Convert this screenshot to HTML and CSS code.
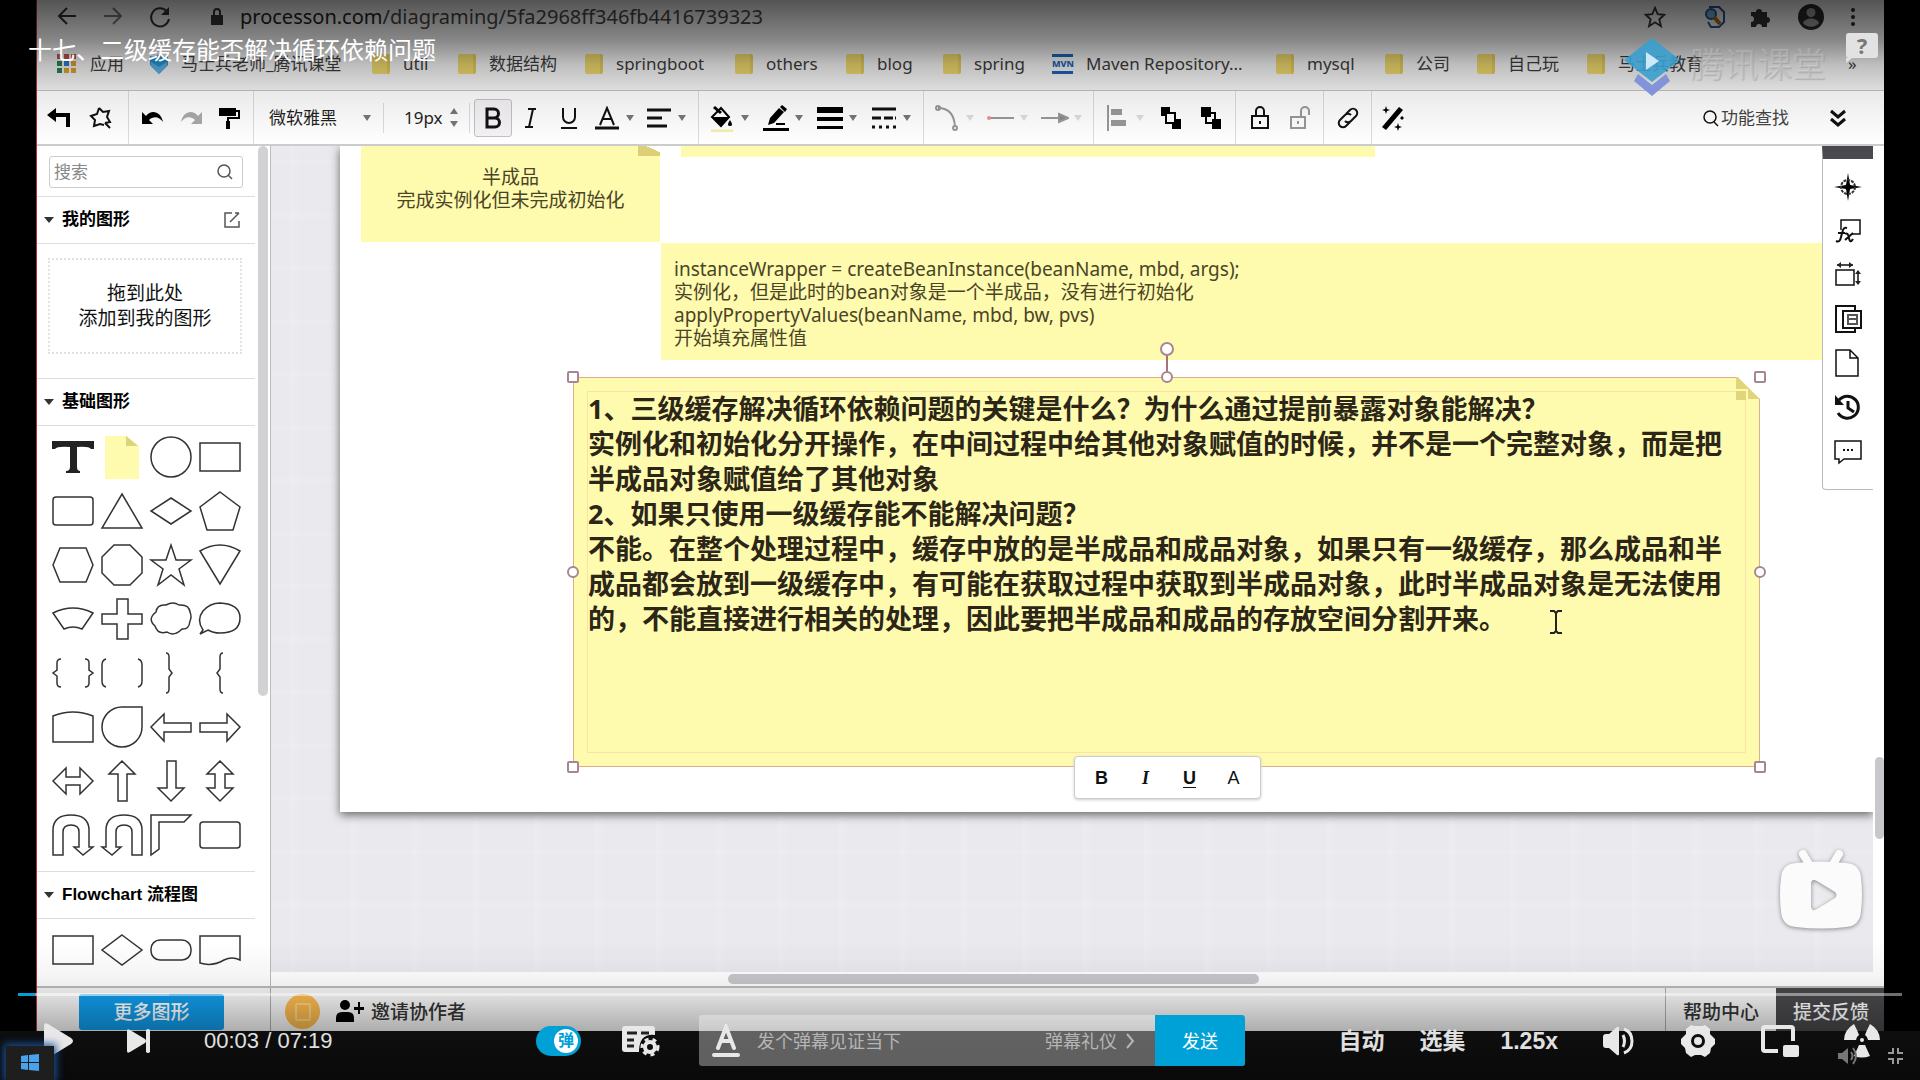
FILE: index.html
```html
<!DOCTYPE html>
<html lang="zh-CN">
<head>
<meta charset="utf-8">
<title>十七、二级缓存能否解决循环依赖问题</title>
<link rel="stylesheet" href="styles.css">
</head>
<body>
<div class="player">
  <div class="video">
    <header class="browser">
      <div class="address">
        <div class="nav">
          <svg width="22" height="22" viewBox="0 0 22 22" class="line dark"><path d="M20 11H3M11 3l-8 8 8 8"/></svg>
          <svg width="22" height="22" viewBox="0 0 22 22" class="line faint"><path d="M2 11h17M11 3l8 8-8 8"/></svg>
          <svg width="24" height="24" viewBox="0 0 24 24" class="line dark"><path d="M19 6.500A9 9 0 1 0 21 14"/><path d="M21 2v8h-8z" fill="#333" stroke="none"/></svg>
        </div>
        <svg class="padlock" width="14" height="18" viewBox="0 0 14 18"><path d="M1 7h12v10H1z"/><path d="M4 7V4a3 3 0 0 1 6 0v3" fill="none" stroke="#333" stroke-width="2"/></svg>
        <span class="url"><b>processon.com</b>/diagraming/5fa2968ff346fb4416739323</span>
        <div class="extensions">
          <svg width="22" height="22" viewBox="0 0 24 24" class="line dark"><path d="M12 2l3 7 7 .6-5.300 4.800L18.500 22 12 17.700 5.500 22l1.800-7.600L2 9.600 9 9z"/></svg>
          <svg width="22" height="22" viewBox="0 0 22 22"><path d="M6 1h10l5 5v10l-5 5H8l-3-5" fill="none" stroke="#2a548c" stroke-width="2"/><circle cx="8" cy="8" r="5" fill="#78a9cf" stroke="#1e569c" stroke-width="2"/><path d="M11 11l6 7" stroke="#a66a16" stroke-width="4"/></svg>
          <svg width="22" height="22" viewBox="0 0 22 22"><path d="M1 6h5a3 3 0 1 1 6 0h5v5a3 3 0 1 1 0 6v4h-5a3 3 0 0 0-6 0H1v-5a3 3 0 0 0 0-6z" fill="#303030"/></svg>
          <svg width="28" height="28" viewBox="0 0 28 28"><circle cx="14" cy="14" r="13" fill="#292929"/><circle cx="14" cy="9.500" r="4.500" fill="#9a9a9a"/><path d="M6 20c2-6 14-6 16 0-4 5-12 5-16 0z" fill="#9a9a9a"/></svg>
          <svg width="6" height="20" viewBox="0 0 6 20" fill="#292929"><circle cx="3" cy="3" r="2"/><circle cx="3" cy="10" r="2"/><circle cx="3" cy="17" r="2"/></svg>
        </div>
      </div>
      <nav class="bookmarks">
        <a href="#"><svg width="20" height="20" viewBox="0 0 20 20"><path d="M0 0h5v5H0zM7 0h5v5H7zM14 0h5v5h-5z" fill="#bf5344"/><path d="M0 7h5v5H0zM0 14h5v5H0z" fill="#29834f"/><path d="M7 7h5v5H7z" fill="#2f79d0"/><path d="M14 7h5v5h-5zM7 14h5v5H7zM14 14h5v5h-5z" fill="#d99f2b"/></svg>应用</a>
        <a href="#"><svg width="18" height="20" viewBox="0 0 18 20"><path d="M0 2q5 2 9-2 4 4 9 2v9l-9 9-9-9z" fill="#2594cf"/><path d="M1 8l8 5 8-5v4l-8 8-8-8z" fill="#5bb0e6"/></svg>马士兵老师_腾讯课堂</a>
        <a href="#"><span class="folder"></span>util</a>
        <a href="#"><span class="folder"></span>数据结构</a>
        <a href="#"><span class="folder"></span>springboot</a>
        <a href="#"><span class="folder"></span>others</a>
        <a href="#"><span class="folder"></span>blog</a>
        <a href="#"><span class="folder"></span>spring</a>
        <a href="#"><span class="mvn">MVN</span>Maven Repository...</a>
        <a href="#"><span class="folder"></span>mysql</a>
        <a href="#"><span class="folder"></span>公司</a>
        <a href="#"><span class="folder"></span>自己玩</a>
        <a href="#"><span class="folder"></span>马士兵教育</a>
        <a href="#" class="overflow">»</a>
      </nav>
    </header>

    <div class="toolbar">
      <div class="group first">
        <button class="tool" aria-label="返回"><svg width="24" height="22" viewBox="0 0 24 22"><path d="M0 8l9-7v5h14v14h-4V10H9v5z"/></svg></button>
        <button class="tool" aria-label="收藏"><svg width="24" height="24" viewBox="0 0 24 24" class="line"><path d="M11 2l4 4 6-1-2 6 3 5-5 1M11 2L9 8l-6 2 4 4-1 6 6-2 4 1M17 17l5 5"/></svg></button>
      </div>
      <div class="group">
        <button class="tool" aria-label="撤销"><svg width="24" height="20" viewBox="0 0 24 20"><path d="M1 4v12h11l-4-4c4-4 10-4 14 2C20 3 10 1 5 8z"/></svg></button>
        <button class="tool" aria-label="重做"><svg width="24" height="20" viewBox="0 0 24 20" fill="#aaa"><path d="M23 4v12H12l4-4C12 8 6 8 2 14 4 3 14 1 19 8z"/></svg></button>
        <button class="tool" aria-label="格式刷"><svg width="24" height="24" viewBox="0 0 24 24"><path d="M2 2h17v8H2z"/><path d="M19 5h3v7H11v4" fill="none" stroke="#000" stroke-width="2"/><path d="M9 15h4v8H9z"/></svg></button>
      </div>
      <div class="font"><select aria-label="字体"><option>微软雅黑</option></select><i class="caret"></i></div>
      <div class="size"><input type="text" value="19px" aria-label="字号"><span class="spin"><i class="caret flip"></i><i class="caret"></i></span></div>
      <div class="group text">
        <button class="tool active" aria-label="加粗"><svg width="20" height="24" viewBox="0 0 20 24" class="line thick"><path d="M4 3h7a4 4 0 0 1 0 9H4zM4 12h8a4 4 0 0 1 0 9H4z"/></svg></button>
        <button class="tool" aria-label="斜体"><svg width="20" height="24" viewBox="0 0 20 24" class="line"><path d="M7 3h8M4 21h8M12 3L8 21"/></svg></button>
        <button class="tool" aria-label="下划线"><svg width="20" height="24" viewBox="0 0 20 24" class="line"><path d="M4 2v9a6 6 0 0 0 12 0V2M2 22h16"/></svg></button>
        <button class="combo" aria-label="文字颜色"><svg width="28" height="24" viewBox="0 0 28 24" class="line"><path d="M7 19l7-17 7 17M10 13h8"/><path d="M2 22h24" stroke-width="3"/></svg><i class="caret"></i></button>
        <button class="combo" aria-label="对齐"><svg width="28" height="24" viewBox="0 0 28 24" class="line thick"><path d="M2 4h24M2 12h15M2 20h20"/></svg><i class="caret"></i></button>
      </div>
      <div class="group paint">
        <button class="combo" aria-label="填充"><svg width="28" height="28" viewBox="0 0 28 28"><path d="M4 13l9-9 8 9-8 9z" fill="none" stroke="#000" stroke-width="2"/><path d="M4 13h18l-9 9zM7 2l7 6-2 2-7-6zM22 16q4 6 0 6t0-6"/><path d="M3 27h22" stroke="#f6f1a8" stroke-width="3"/></svg><i class="caret"></i></button>
        <button class="combo" aria-label="线条颜色"><svg width="28" height="26" viewBox="0 0 28 26"><path d="M6 20l2-7 9-10 5 4-10 11zM18 2l2-2 5 4-2 3zM14 18h9v2h-9zM1 23h26v3H1z"/></svg><i class="caret"></i></button>
        <button class="combo" aria-label="线条宽度"><svg width="28" height="24" viewBox="0 0 28 24"><path d="M1 1h26v6H1zM1 11h26v4H1zM1 20h26v3H1z"/></svg><i class="caret"></i></button>
        <button class="combo" aria-label="线条样式"><svg width="28" height="24" viewBox="0 0 28 24" class="line thick"><path d="M2 3h24"/><path d="M2 12h24" stroke-dasharray="9 3 9 2 3"/><path d="M2 21h24" stroke-dasharray="3 4"/></svg><i class="caret"></i></button>
      </div>
      <div class="group connect">
        <button class="combo" aria-label="连线类型"><svg width="28" height="26" viewBox="0 0 28 26" class="line mute"><path d="M5 3q16 0 17 19"/><circle cx="5" cy="3" r="2"/><circle cx="22" cy="23" r="2"/></svg><i class="caret light"></i></button>
        <button class="combo" aria-label="起点"><svg width="28" height="24" viewBox="0 0 28 24" class="line mute"><path d="M1 12h26"/><circle cx="2" cy="12" r="1" stroke="#f09090"/></svg><i class="caret light"></i></button>
        <button class="combo" aria-label="终点"><svg width="28" height="24" viewBox="0 0 28 24" class="line mute"><path d="M0 12h20"/><path d="M18 8l9 4-9 4z" fill="#888"/></svg><i class="caret light"></i></button>
      </div>
      <div class="group connect">
        <button class="combo" aria-label="对齐图形"><svg width="28" height="26" viewBox="0 0 28 26" fill="#999"><path d="M4 0h2v26H4zM8 4h11v6H8zM8 15h15v6H8z"/></svg><i class="caret light"></i></button>
        <button class="tool" aria-label="置于顶层"><svg width="22" height="24" viewBox="0 0 22 24"><path d="M1 1h9v9H1zM12 13h9v10h-9z"/><path d="M6 7h9v10H6z" fill="#fff" stroke="#000" stroke-width="2"/></svg></button>
        <button class="tool" aria-label="置于底层"><svg width="22" height="24" viewBox="0 0 22 24"><path d="M6 7h9v10H6z" fill="#fff" stroke="#000" stroke-width="2"/><path d="M1 1h10v10H1zM12 13h9v10h-9z"/></svg></button>
      </div>
      <div class="group locks">
        <button class="tool" aria-label="锁定"><svg width="20" height="24" viewBox="0 0 20 24" class="line"><path d="M2 10h16v12H2zM6 10V5a4 4 0 0 1 8 0v5M10 15v3"/></svg></button>
        <button class="tool" aria-label="解锁"><svg width="22" height="24" viewBox="0 0 22 24" class="line mute"><path d="M2 11h14v11H2zM12 11V5a4 4 0 0 1 8 0v4M9 15v3"/></svg></button>
      </div>
      <div class="group locks">
        <button class="tool" aria-label="链接"><svg width="24" height="24" viewBox="0 0 24 24" class="line"><path d="M10 8l4-4a4 4 0 0 1 6 6l-5 5a4 4 0 0 1-6 0M14 16l-4 4a4 4 0 0 1-6-6l5-5a4 4 0 0 1 6 0"/></svg></button>
      </div>
      <div class="group last">
        <button class="tool" aria-label="美化"><svg width="24" height="26" viewBox="0 0 24 26"><path d="M1 22L18 2l4 3L5 25z"/><path d="M5 1l1 3 3 1-3 1-1 3-1-3-3-1 3-1zM17 18l1 3 3 1-3 1-1 3-1-3-3-1 3-1zM21 11l2 2-2 2-2-2z"/></svg></button>
      </div>
      <button class="find"><svg width="16" height="18" viewBox="0 0 16 18" class="line thin"><circle cx="7" cy="8" r="6"/><path d="M11 13l4 4"/></svg>功能查找</button>
      <button class="tool more" aria-label="收起"><svg width="16" height="18" viewBox="0 0 16 18" class="line thick"><path d="M1 2l7 6 7-6M1 10l7 6 7-6"/></svg></button>
    </div>

    <div class="workspace">
      <aside class="sidebar">
        <div class="shelf">
          <label class="search"><input type="text" placeholder="搜索" aria-label="搜索"><svg width="16" height="16" viewBox="0 0 16 16" class="line dim"><circle cx="7" cy="7" r="6"/><path d="M11 11l4 4"/></svg></label>
          <h2>我的图形<svg width="16" height="16" viewBox="0 0 16 16" class="line dim"><path d="M8 1H1v14h14V9M6 10l9-9M11 1h4"/></svg></h2>
          <div class="dropwrap"><p class="drop">拖到此处<br>添加到我的图形</p></div>
          <h2>基础图形</h2>
          <div class="shapes">
            <svg viewBox="0 0 42 42"><path d="M0 5h42v8h-3q-2-3-14-2v20q0 4 3 4v2H14v-2q4 0 4-4V11Q5 10 3 13H0z" fill="#222" stroke="none"/></svg>
            <svg viewBox="0 0 42 42"><path d="M4 0h22l12 10v33H4z" fill="#fefaae" stroke="none"/><path d="M25 0l12 10H25z" fill="#ddd27e" stroke="none"/></svg>
            <svg viewBox="0 0 42 42"><circle cx="21" cy="21" r="20"/></svg>
            <svg viewBox="0 0 42 42"><path d="M1 7h40v28H1z"/></svg>
            <svg viewBox="0 0 42 42"><rect x="1" y="7" width="40" height="28" rx="3"/></svg>
            <svg viewBox="0 0 42 42"><path d="M21 4l20 34H1z"/></svg>
            <svg viewBox="0 0 42 42"><path d="M21 8l20 13-20 13L1 21z"/></svg>
            <svg viewBox="0 0 42 42"><path d="M21 2l20 15-7 23H8L1 17z"/></svg>
            <svg viewBox="0 0 42 42"><path d="M8 4h26l7 17-7 17H8L1 21z"/></svg>
            <svg viewBox="0 0 42 42"><path d="M13 1h16l12 12v16L29 41H13L1 29V13z"/></svg>
            <svg viewBox="0 0 42 42"><path d="M21 1l5 15h15L29 25l5 16-13-10L8 41l5-16L1 16h15z"/></svg>
            <svg viewBox="0 0 42 42"><path d="M1 7q20-12 40 0L21 40z"/></svg>
            <svg viewBox="0 0 42 42"><path d="M1 15q20-10 40 0L30 31q-9-4-18 0z"/></svg>
            <svg viewBox="0 0 42 42"><path d="M16 1h11v15h14v10H27v15H16V26H1V16h15z"/></svg>
            <svg viewBox="0 0 42 42"><path d="M6 14q1-8 10-7 7-4 13 0 10-1 11 7 2 5 0 9-1 9-8 8-8 8-15 3-9 3-12-6-8-7 1-14z"/></svg>
            <svg viewBox="0 0 42 42"><path d="M4 32Q-3 22 4 13 11 5 21 5q20 1 20 15 0 15-20 15-7 0-12-3l-8 4z"/></svg>
            <svg viewBox="0 0 42 42"><path d="M9 7q-4 0-4 4v7l-4 3 4 3v7q0 4 4 4M33 7q4 0 4 4v7l4 3-4 3v7q0 4-4 4"/></svg>
            <svg viewBox="0 0 42 42"><path d="M5 7q-4 1-4 6v16q0 5 4 6M37 7q4 1 4 6v16q0 5-4 6"/></svg>
            <svg viewBox="0 0 42 42"><path d="M16 1q3 0 3 4v12l3 4-3 4v12q0 4-3 4"/></svg>
            <svg viewBox="0 0 42 42"><path d="M24 1q-3 0-3 4v12l-3 4 3 4v12q0 4 3 4"/></svg>
            <svg viewBox="0 0 42 42"><path d="M1 10q20-8 40 0v26H1z"/></svg>
            <svg viewBox="0 0 42 42"><path d="M21 1h20v20a20 20 0 1 1-20-20z"/></svg>
            <svg viewBox="0 0 42 42"><path d="M1 21L14 8v9h27v9H14v9z"/></svg>
            <svg viewBox="0 0 42 42"><path d="M41 21L28 8v9H1v9h27v9z"/></svg>
            <svg viewBox="0 0 42 42"><path d="M1 21L14 8v9h14V8l13 13-13 13v-9H14v9z"/></svg>
            <svg viewBox="0 0 42 42"><path d="M21 1l13 13h-8v27h-9V14H8z"/></svg>
            <svg viewBox="0 0 42 42"><path d="M21 41l13-13h-8V1h-9v27H8z"/></svg>
            <svg viewBox="0 0 42 42"><path d="M21 1l13 13h-8v14h8L21 41 8 28h8V14H8z"/></svg>
            <svg viewBox="0 0 42 42"><path d="M1 41V15Q2 1 19 1t18 14v18h4l-10 8-9-8h5V18q0-7-8-7t-8 7v23z"/></svg>
            <svg viewBox="0 0 42 42"><path d="M41 41V15Q40 1 23 1T5 15v18H1l10 8 9-8h-5V18q0-7 8-7t8 7v23z"/></svg>
            <svg viewBox="0 0 42 42"><path d="M1 1h40l-7 7H9v27l-8 6z"/></svg>
            <svg viewBox="0 0 42 42"><rect x="1" y="8" width="40" height="26" rx="3"/></svg>
          </div>
          <h2>Flowchart 流程图</h2>
          <div class="shapes">
            <svg viewBox="0 0 42 42"><path d="M1 7h40v28H1z"/></svg>
            <svg viewBox="0 0 42 42"><path d="M21 6l20 15-20 15L1 21z"/></svg>
            <svg viewBox="0 0 42 42"><rect x="1" y="11" width="40" height="20" rx="9"/></svg>
            <svg viewBox="0 0 42 42"><path d="M1 7h40v24q-8-4-16 0-12 7-24 3z"/></svg>
          </div>
        </div>
        <span class="sidebar-thumb"></span>
      </aside>

      <main class="stage">
        <div class="canvas">
          <div class="sheet"></div>
          <div class="note note-half">半成品<br>完成实例化但未完成初始化<span class="ear"></span></div>
          <div class="note note-strip"></div>
          <div class="note note-code">instanceWrapper = createBeanInstance(beanName, mbd, args);<br>实例化，但是此时的bean对象是一个半成品，没有进行初始化<br>applyPropertyValues(beanName, mbd, bw, pvs)<br>开始填充属性值</div>
          <div class="note note-main">
            1、三级缓存解决循环依赖问题的关键是什么？为什么通过提前暴露对象能解决？<br>
            实例化和初始化分开操作，在中间过程中给其他对象赋值的时候，并不是一个完整对象，而是把<br>
            半成品对象赋值给了其他对象<br>
            2、如果只使用一级缓存能不能解决问题？<br>
            不能。在整个处理过程中，缓存中放的是半成品和成品对象，如果只有一级缓存，那么成品和半<br>
            成品都会放到一级缓存中，有可能在获取过程中获取到半成品对象，此时半成品对象是无法使用<br>
            的，不能直接进行相关的处理，因此要把半成品和成品的存放空间分割开来。
            <span class="inner"></span>
            <svg class="fold" width="24" height="24" viewBox="0 0 24 24"><path d="M0 0h2l22 22H12V12H0z" fill="#e0d47d"/><path d="M0 14h10v9H0z" fill="#e0d47d"/><path d="M2 0h22v22z" fill="#fff"/></svg>
            <span class="stem"></span>
            <span class="handle tl"></span><span class="handle tr"></span><span class="handle bl"></span><span class="handle br"></span>
            <span class="handle dot top"></span><span class="handle dot turn"></span><span class="handle dot west"></span><span class="handle dot east"></span>
          </div>
          <div class="mini">
            <button class="heavy">B</button><button class="heavy slant">I</button><button class="heavy under">U</button><button>A</button>
          </div>
          <svg class="ibeam" width="14" height="26" viewBox="0 0 14 26"><path d="M1 2h4l2 2 2-2h4M7 4v18M1 24h4l2-2 2 2h4" fill="none" stroke="#222" stroke-width="2"/></svg>
          <div class="dock">
            <svg width="28" height="28" viewBox="0 0 28 28"><path d="M14 0l2 12 12 2-12 2-2 12-2-12-12-2 12-2z"/><circle cx="14" cy="14" r="3"/><circle cx="14" cy="14" r="7" fill="none" stroke="#333" stroke-width="2" stroke-dasharray="3 1"/></svg>
            <svg width="28" height="28" viewBox="0 0 28 28" class="line thin"><path d="M7 13V3h19v14h-8"/><path d="M2 24q4 2 5-4l2-7q1-3 4-2M4 16h7M11 17q3-2 4 4t4 1M19 16l-8 7" stroke-width="2"/></svg>
            <svg width="28" height="28" viewBox="0 0 28 28" class="line thin"><path d="M2 9h18v15H2zM3 4h16M24 10v13"/><path d="M3 4l4-3v6zM19 4l-4-3v6zM24 9l-3 4h6zM24 24l-3-4h6z" fill="#222" stroke="none"/></svg>
            <svg width="28" height="28" viewBox="0 0 28 28" class="line"><path d="M21 5V1H2v26h19v-4M9 6h18v17H9z"/><path d="M14 10h9v9h-9zM14 14h9" stroke="#555"/></svg>
            <svg width="28" height="28" viewBox="0 0 28 28" class="line thin"><path d="M2 1h14l8 8v18H2zM16 1v8h8"/></svg>
            <svg width="28" height="28" viewBox="0 0 28 28" class="line"><path d="M5 7a11 11 0 1 1-1 13M14 8v7l6 4" stroke-width="3"/><path d="M1 2v10h9z" fill="#111" stroke="none"/></svg>
            <svg width="28" height="28" viewBox="0 0 28 28" class="line thin"><path d="M1 4h26v18H10l-5 4v-4H1z"/><path d="M9 13h2M13 13h2M17 13h2" stroke-width="2"/></svg>
          </div>
        </div>
        <span class="v-thumb"></span>
        <span class="h-thumb"></span>
      </main>
    </div>

    <footer class="status">
      <div class="status-left"><button class="more-shapes">更多图形</button></div>
      <span class="avatar"></span>
      <svg width="28" height="24" viewBox="0 0 28 24"><circle cx="9" cy="6" r="5"/><path d="M0 23v-4q0-6 6-6h6q6 0 6 6v4zM22 3h2v5h4v3h-4v4h-2v-4h-4V8h4z"/></svg>
      <a class="invite" href="#">邀请协作者</a>
      <a class="help-center" href="#">帮助中心</a>
      <a class="feedback" href="#">提交反馈</a>
    </footer>
  </div>

  <div class="shade-top"></div>
  <div class="shade-bottom"></div>
  <h1 class="title">十七、二级缓存能否解决循环依赖问题</h1>
  <div class="watermark">
    <svg width="56" height="58" viewBox="0 0 56 58"><path d="M28 0l28 22-28 22L0 22z" fill="#3a9fce" opacity=".9"/><path d="M14 36l14 11 14-11 4 7-18 15-18-15z" fill="#8194d8"/><path d="M22 14l13 9-13 9z" fill="#cbe9f7"/></svg>
    腾讯课堂
  </div>
  <button class="help" aria-label="帮助">?</button>
  <svg class="tv" width="86" height="82" viewBox="0 0 86 82"><path d="M25 4l7 12M61 4l-7 12" stroke="#fbfbfc" stroke-width="8" stroke-linecap="round"/><path fill-rule="evenodd" d="M18 13q25-3 50 0 14 1 15 15 2 16 0 33-1 15-15 16-25 3-50 0Q4 76 3 61q-2-17 0-33 1-14 15-15zM33 33v24q1 5 6 2l18-11q3-3 0-6L39 31q-5-3-6 2z" fill="#fbfbfc"/></svg>

  <progress class="progress" value="9" max="1000" aria-label="播放进度"></progress>
  <div class="controls">
    <div class="left">
      <button aria-label="播放"><svg width="30" height="36" viewBox="0 0 30 36"><path d="M0 3q0-4 4-2l23 14q4 3 0 6L4 35q-4 2-4-2z"/></svg></button>
      <button aria-label="下一个"><svg width="24" height="24" viewBox="0 0 24 24"><path d="M0 2q0-3 3-1l15 9q2 2 0 4L3 23q-3 2-3-1zM19 1q2-2 4 0v22q-2 2-4 0z"/></svg></button>
      <span class="time">00:03 / 07:19</span>
    </div>
    <div class="middle">
      <label class="toggle"><input type="checkbox" checked aria-label="弹幕开关"><span>弹</span></label>
      <button aria-label="弹幕设置"><svg width="38" height="32" viewBox="0 0 38 32"><path d="M3 1h27q3 0 3 3v6q-15-2-16 15v2H3q-3 0-3-3V4q0-3 3-3z"/><path d="M5 8h10M19 8h8M5 15h7M5 21h7" stroke="#222" stroke-width="3"/><circle cx="28" cy="22" r="5" fill="none" stroke="#e8e8e8" stroke-width="4"/><circle cx="28" cy="22" r="8" fill="none" stroke="#e8e8e8" stroke-width="3" stroke-dasharray="4 4"/></svg></button>
      <form class="send">
        <svg width="28" height="34" viewBox="0 0 28 34" class="line pale"><path d="M6 24l8-21 8 21M9 17h10M2 31h24"/></svg>
        <input type="text" placeholder="发个弹幕见证当下" aria-label="弹幕">
        <a href="#">弹幕礼仪<svg width="10" height="16" viewBox="0 0 10 16"><path d="M2 1l6 7-6 7" fill="none" stroke="#b5b5b5" stroke-width="2"/></svg></a>
        <button type="button">发送</button>
      </form>
    </div>
    <div class="right">
      <div class="words"><button>自动</button><button>选集</button><button>1.25x</button></div>
      <button aria-label="音量"><svg width="32" height="30" viewBox="0 0 32 30"><path d="M0 11q0-3 3-3h3l8-7q2-1 2 1v26q0 2-2 1l-8-7H3q-3 0-3-3z"/><path d="M20 9q3 6 0 12M21 3q8 3 8 12t-8 12" fill="none" stroke="#e8e8e8" stroke-width="3"/></svg></button>
      <button aria-label="设置"><svg width="36" height="34" viewBox="0 0 36 34"><path fill-rule="evenodd" d="M11 1l3 1h8l3-1 5 4v5l5 5v5l-4 4-1 5-5 4-4-2h-6l-4 2-5-4-1-5-4-4v-5l5-5V5zM18 10a7 7 0 1 0 0 14 7 7 0 0 0 0-14z"/><circle cx="18" cy="17" r="4"/></svg></button>
      <button aria-label="小窗播放"><svg width="38" height="32" viewBox="0 0 38 32"><path d="M17 26H4q-2 0-2-2V4q0-2 2-2h26q2 0 2 2v12" fill="none" stroke="#e8e8e8" stroke-width="4"/><rect x="22" y="20" width="16" height="12" rx="2"/></svg></button>
      <button aria-label="关灯"><svg width="36" height="34" viewBox="0 0 36 34"><circle cx="18" cy="16" r="2"/><path d="M10 0L13 6l2 5q-3 2-3 5H0Q0 6 10 0zM26 0q10 6 10 16H24q0-3-3-5l2-5zM15 21h6l5 11q-8 3-16 0z"/></svg></button>
    </div>
  </div>
  <svg class="tray" width="68" height="20" viewBox="0 0 68 20"><path d="M0 7h4l6-5v16l-6-5H0z" fill="#777"/><path d="M13 6q3 4 0 8M15 2q6 8 0 16" fill="none" stroke="#777" stroke-width="2"/><path d="M50 7h5V2M65 7h-5V2M50 13h5v5M65 13h-5v5" fill="none" stroke="#999" stroke-width="2"/></svg>
  <button class="start" aria-label="开始"><svg width="18" height="18" viewBox="0 0 18 18" fill="#4aa3ea"><path d="M0 2l7-1v7H0zM8 1l10-1v8H8zM0 9h7v7l-7-1zM8 9h10v8L8 16z"/></svg></button>
</div>
</body>
</html>
```
FILE: styles.css
```css
* { box-sizing: border-box; }
body { margin: 0; background: #000; color: #222; font: 17px/24px "Noto Sans", "Noto Sans CJK SC", sans-serif; }
button { border: 0; padding: 0; background: none; font: inherit; color: inherit; }
input, select { border: 0; background: none; font: inherit; color: inherit; min-width: 0; }
a { color: inherit; text-decoration: none; }
svg { display: block; flex: none; }
h1, h2, p { margin: 0; }

.line { fill: none; stroke: #111; stroke-width: 2; }
.line.thick { stroke-width: 3; }
.line.thin { stroke-width: 1.500; }
.line.dark { stroke: #333; }
.line.faint { stroke: #777; }
.line.mute { stroke: #999; }
.line.dim { stroke: #555; stroke-width: 1.500; }
.line.pale { stroke: #e8e8e8; stroke-width: 4; stroke-linecap: round; }

.player { position: relative; height: 100vh; min-height: 720px; padding: 0 36px 49px; overflow: hidden; background: #141414; }
.video { display: flex; flex-direction: column; height: 100%; background: #fff; box-shadow: -36px 0 #000, 36px 0 #000; border-left: 1px solid #a33; }

.browser { border-bottom: 1px solid #c4c4c4; background: #f1f1f1; }
.address { display: flex; align-items: center; height: 34px; padding: 0 28px 0 19px; }
.nav { display: flex; gap: 24px; width: 154px; }
.padlock { fill: #333; margin-right: 16px; }
.url { font-size: 20px; color: #454545; }
.url b { font-weight: 400; color: #222; }
.extensions { display: flex; align-items: center; gap: 25px; margin-left: auto; }
.extensions svg:first-child { margin-right: 12px; }
.bookmarks { display: grid; grid-template-columns: 93px 222px 86px 127px 150px 111px 97px 109px 224px 109px 92px 110px 1fr 36px; height: 56px; padding-left: 20px; align-items: center; color: #3c3c3c; white-space: nowrap; }
.bookmarks a { display: flex; align-items: center; gap: 13px; padding-top: 4px; }
.folder { width: 18px; height: 20px; border-radius: 2px; background: #ecd66c; border-right: 3px solid #e2c75a; }
.mvn { width: 21px; border: solid #1b62b8; border-width: 3px 0; font-size: 9px; line-height: 14px; font-weight: 800; color: #1b62b8; text-align: center; }

.toolbar { display: flex; align-items: center; height: 55px; border-bottom: 2px solid #ccc; }
.group { display: flex; align-items: center; align-self: stretch; padding-left: 5px; border-right: 1px solid #ddd; width: 125px; }
.group.first { width: 92px; gap: 3px; padding-left: 3px; }
.group.text { width: 229px; padding-left: 4px; }
.group.paint { width: 225px; gap: 2px; padding-left: 4px; }
.group.connect { gap: 2px; width: auto; padding: 0 5px 0 4px; }
.group.locks { gap: 2px; width: auto; padding-right: 4px; }
.group.last { width: auto; border: 0; padding-left: 2px; }
.tool { display: grid; place-items: center; width: 38px; height: 38px; }
.tool.active { border: 1px solid #c5c0c8; border-radius: 3px; background: #f6f3f7; }
.combo { display: flex; align-items: center; gap: 5px; width: 52px; height: 38px; padding-left: 5px; }
.caret { border: 4px solid transparent; border-top: 6px solid #777; border-bottom: 0; }
.caret.light { border-top-color: #ddd; }
.caret.flip { transform: rotate(180deg); }
.font { display: flex; align-items: center; width: 130px; height: 30px; padding: 0 12px; border-right: 1px solid #ddd; }
.font select { flex: 1; appearance: none; padding: 0 0 0 3px; }
.size { display: flex; align-items: center; width: 86px; height: 30px; border-right: 1px solid #ddd; }
.size input { width: 66px; padding: 0 0 0 20px; }
.spin { display: grid; gap: 7px; }
.find { display: flex; align-items: center; gap: 2px; margin-left: auto; color: #444; }
.more { margin: 0 27px 0 30px; }

.workspace { display: flex; flex: 1; min-height: 0; }
.sidebar { display: flex; gap: 3px; width: 234px; border-right: 1px solid #bbb; }
.shelf { width: 218px; overflow: hidden; }
.search { display: flex; align-items: center; height: 32px; margin: 10px 12px 8px; padding-right: 9px; border: 1px solid #ccc; border-radius: 3px; }
.search input { flex: 1; padding: 0 4px; }
.search input::placeholder { color: #888; }
.shelf h2 { display: flex; align-items: center; height: 48px; padding: 0 15px 0 7px; border: solid #ddd; border-width: 1px 0; font: 700 17px/24px "Liberation Sans", "Noto Sans CJK SC", sans-serif; color: #000; }
.shelf h2::before { content: ""; margin-right: 8px; border: 5px solid transparent; border-top: 6px solid #333; border-bottom: 0; }
.shelf h2 svg { margin-left: auto; }
.dropwrap { padding: 14px 13px 24px 11px; }
.drop { padding: 21px 0; border: 2px dotted #e2e2e2; text-align: center; font-size: 19px; line-height: 25px; color: #111; }
.shapes { display: grid; grid-template-columns: repeat(4, 49px); grid-auto-rows: 54px; padding: 4px 11px 9px; place-items: center; }
.shapes svg { width: 42px; height: 42px; fill: none; stroke: #333; stroke-width: 1.500; overflow: visible; }
.sidebar-thumb { width: 10px; height: 550px; border-radius: 5px; background: #d2d2d4; }

.stage { position: relative; flex: 1; min-width: 0; padding: 0 11px 14px 0; }
.canvas { position: relative; height: 100%; overflow: hidden; background: repeating-linear-gradient(90deg, #fff0 0 17px, #ffffff22 20px 22px, #fff0 29px 61px), repeating-linear-gradient(#fff0 0 13px, #ffffff18 15px 17px, #fff0 21px 53px), #e9e9ee; }
.v-thumb, .h-thumb { position: absolute; border-radius: 5px; background: #c8c8cc; }
.v-thumb { right: 0; top: 611px; width: 9px; height: 82px; }
.h-thumb { left: 457px; bottom: 2px; width: 531px; height: 10px; }

.sheet { position: absolute; inset: 0 0 auto 69px; height: 666px; background: #fff; box-shadow: 0 3px 9px #666; }
.note { position: absolute; background: #fefaae; white-space: nowrap; font-size: 19px; line-height: 23px; color: #4a4526; }
.note-half { left: 90px; top: 0; width: 299px; height: 96px; padding-top: 20px; text-align: center; }
.ear { position: absolute; right: 0; top: 0; width: 22px; height: 10px; background: linear-gradient(to top right, #dccf77 68%, #fff 69%); }
.note-strip { left: 410px; top: 0; width: 694px; height: 11px; }
.note-code { left: 390px; top: 97px; right: 0; height: 117px; padding: 15px 13px; }
.note-main { left: 302px; top: 231px; width: 1187px; height: 390px; padding: 13px 14px; border: 1px solid #deae8c; font-size: 27px; line-height: 35px; font-weight: 700; color: #2c2618; }
.inner { position: absolute; inset: 13px; border: 1px solid #f8e2a8; }
.fold { position: absolute; right: -1px; top: -1px; }
.stem { position: absolute; left: 592px; top: -28px; height: 28px; border-left: 2px solid #a8727c; }
.handle { position: absolute; width: 12px; height: 12px; border: 2px solid #a88691; border-radius: 2px; background: #fff; }
.tl { left: -7px; top: -7px; } .tr { right: -7px; top: -7px; }
.bl { left: -7px; bottom: -7px; } .br { right: -7px; bottom: -7px; }
.dot { border-radius: 50%; }
.top { left: 587px; top: -7px; }
.turn { left: 586px; top: -36px; width: 14px; height: 14px; }
.west { left: -7px; top: 188px; } .east { right: -7px; top: 188px; }
.mini { position: absolute; left: 803px; top: 610px; display: flex; justify-content: center; gap: 20px; width: 187px; height: 43px; border: 1px solid #ccc; border-radius: 4px; background: #fff; box-shadow: 0 1px 3px #ccc; font: 18px/40px "Liberation Sans", sans-serif; color: #111; }
.mini button { width: 24px; }
.mini .heavy { font-weight: 700; }
.mini .slant { font-style: italic; font-family: "Liberation Serif", serif; }
.mini .under { text-decoration: underline; text-underline-offset: 3px; }
.ibeam { position: absolute; left: 1278px; top: 463px; }
.dock { position: absolute; right: -1px; top: 0; display: grid; gap: 16px; justify-content: center; width: 52px; padding: 14px 2px 24px 0; border: solid #bbb; border-width: 13px 0 1px 1px; border-top-color: #4a494d; border-radius: 0 0 0 4px; background: #fff; }

.status { display: flex; align-items: center; height: 45px; border-top: 2px solid #bbb; background: #f4f4f4; font-size: 19px; font-weight: 500; color: #333; }
.status-left { display: flex; justify-content: center; align-items: center; width: 234px; height: 100%; padding: 4px 4px 0 0; border-right: 1px solid #aaa; }
.more-shapes { width: 145px; height: 36px; border-radius: 3px; background: #109ae8; color: #fff; }
.avatar { display: grid; place-items: center; width: 35px; height: 35px; margin: 4px 16px 0 14px; border-radius: 50%; background: #f8b84c; }
.avatar::after { content: ""; width: 12px; height: 14px; border: 2px solid #fbd085; border-radius: 2px; }
.status > svg { margin-top: 2px; }
.invite { padding: 4px 0 0 7px; }
.help-center, .feedback { display: grid; place-items: center; height: 100%; padding: 4px 17px 0; border-left: 1px solid #aaa; }
.help-center { margin-left: auto; }
.feedback { padding: 4px 15px 0 17px; border: 0; background: #48474a; color: #fff; }

.shade-top, .shade-bottom { position: absolute; left: 0; right: 0; pointer-events: none; }
.shade-top { top: 0; height: 144px; background: linear-gradient(#000000a6, #00000070 28%, #00000036 45%, #00000016 62%, #0000); }
.shade-bottom { bottom: 0; height: 140px; background: linear-gradient(#0000, #0000000a 25%, #00000018 40%, #0000004c 66%, #00000088); }
.title { position: absolute; left: 28px; top: 34px; font-size: 24px; line-height: 32px; font-weight: 400; color: #fff; }
.watermark { position: absolute; right: 94px; top: 38px; display: flex; gap: 10px; font-size: 34px; line-height: 52px; color: #ffffff30; text-shadow: 1px 1px 1px #8886; }
.help { position: absolute; right: 42px; top: 33px; width: 32px; height: 25px; border-radius: 3px; background: #e2e2e2; color: #777; font: 700 22px/25px "Noto Sans", sans-serif; }
.help::after { content: ""; position: absolute; left: 0; top: 25px; border-right: 6px solid transparent; border-top: 5px solid #e2e2e2; }
.tv { position: absolute; right: 56px; top: 850px; filter: drop-shadow(0 1px 2px #888); }

.progress { position: absolute; left: 18px; bottom: 84px; display: block; width: calc(100% - 36px); height: 3px; border: 0; appearance: none; background: #ffffff4d; }
.progress::-webkit-progress-bar { background: linear-gradient(90deg, #ffffff66 8%, #ffffff30 0); }
.progress::-webkit-progress-value { background: #00a1d6; }
.controls { position: absolute; left: 0; right: 0; bottom: 14px; display: grid; grid-template-columns: 536px 709px 1fr; align-items: center; color: #e0e0e0; }
.controls button svg { fill: #e8e8e8; }
.left, .middle, .right { display: flex; align-items: center; }
.left { gap: 53px; padding-left: 44px; }
.time { font: 22px/26px "Liberation Sans", sans-serif; }
.toggle { position: relative; display: flex; justify-content: flex-end; align-items: center; width: 45px; height: 30px; margin-right: 41px; padding: 3px; border-radius: 15px; background: #00a1d6; }
.toggle input { position: absolute; inset: 0; margin: 0; opacity: 0; }
.toggle span { width: 24px; height: 24px; border-radius: 50%; background: #fff; color: #00a1d6; font-size: 16px; line-height: 23px; font-weight: 700; text-align: center; }
.send { display: flex; flex: 1; align-items: center; height: 51px; margin-left: 39px; padding-left: 13px; border-radius: 3px; background: #ffffff59; font-size: 18px; }
.send input { flex: 1; padding: 0 0 0 17px; }
.send input::placeholder { color: #b5b5b5; }
.send a { display: flex; align-items: center; gap: 8px; margin-right: 20px; color: #b5b5b5; }
.send button { align-self: stretch; width: 90px; border-radius: 0 3px 3px 0; background: #00a1d6; color: #fff; }
.right { justify-content: flex-end; gap: 45px; padding-right: 40px; }
.words { display: flex; gap: 35px; font: 700 23px/28px "Liberation Sans", "Noto Sans CJK SC", sans-serif; }
.tray { position: absolute; right: 14px; bottom: 14px; }
.start { position: absolute; left: 6px; bottom: 0; display: grid; place-items: center; width: 48px; height: 34px; background: #1e1e1f; box-shadow: 0 0 8px 2px #1c529c; }
```
